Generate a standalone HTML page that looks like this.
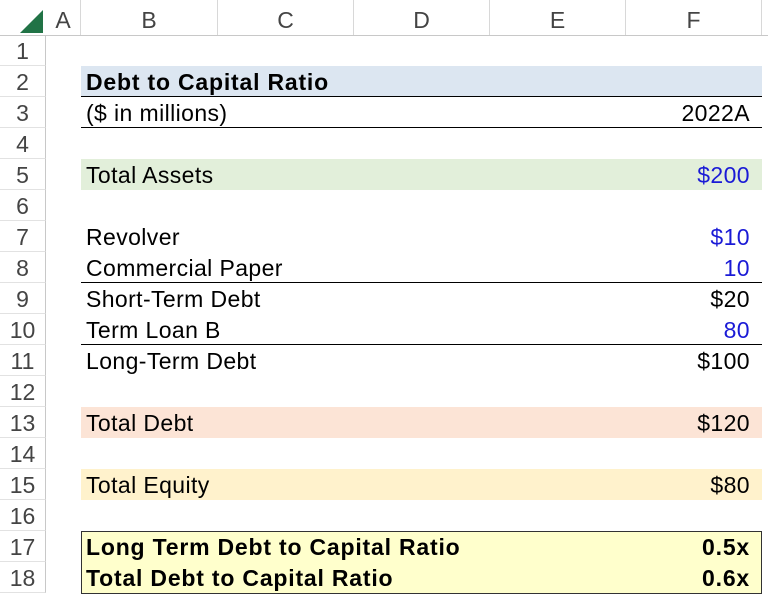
<!DOCTYPE html>
<html><head><style>
body{margin:0;width:768px;height:599px;overflow:hidden;background:#fff;font-family:"Liberation Sans",Arial,sans-serif;position:relative}
.hdr{position:absolute;top:0;left:0;width:768px;height:35px;background:#fff;border-bottom:1px solid #c8c8c8}
.col{position:absolute;top:0;height:35px;line-height:40px;text-align:center;font-size:23px;color:#444;border-right:1px solid #d8d8d8;box-sizing:border-box}
.rh{position:absolute;left:0;width:46px;height:31px;border-right:1px solid #c8c8c8;border-bottom:1px solid #e2e2e2;box-sizing:border-box;text-align:center;line-height:33px;font-size:23px;color:#444}
.r{position:absolute;left:81px;width:681px;height:31px;box-sizing:border-box;font-size:23px;line-height:33px;color:#000;letter-spacing:0.4px}
.r .l{position:absolute;left:5px}
.r .v{position:absolute;right:12px}
.bd{font-weight:bold;letter-spacing:0.8px}
.b{color:#1a1ad6}
</style></head><body>
<div class="hdr"></div>
<svg style="position:absolute;left:20px;top:10px" width="24" height="24"><polygon points="23,0 23,23 0,23" fill="#217346"/></svg>
<div class="col" style="left:46px;width:35px">A</div>
<div class="col" style="left:81px;width:137px">B</div>
<div class="col" style="left:218px;width:136px">C</div>
<div class="col" style="left:354px;width:136px">D</div>
<div class="col" style="left:490px;width:136px">E</div>
<div class="col" style="left:626px;width:136px">F</div>
<div class="rh" style="top:35px">1</div><div class="rh" style="top:66px">2</div><div class="rh" style="top:97px">3</div><div class="rh" style="top:128px">4</div><div class="rh" style="top:159px">5</div><div class="rh" style="top:190px">6</div><div class="rh" style="top:221px">7</div><div class="rh" style="top:252px">8</div><div class="rh" style="top:283px">9</div><div class="rh" style="top:314px">10</div><div class="rh" style="top:345px">11</div><div class="rh" style="top:376px">12</div><div class="rh" style="top:407px">13</div><div class="rh" style="top:438px">14</div><div class="rh" style="top:469px">15</div><div class="rh" style="top:500px">16</div><div class="rh" style="top:531px">17</div><div class="rh" style="top:562px">18</div>

<div class="r bd" style="top:66px;background:#dce6f1;border-bottom:1px solid #000"><span class="l">Debt to Capital Ratio</span></div>
<div class="r" style="top:97px;border-bottom:1px solid #000"><span class="l">($ in millions)</span><span class="v">2022A</span></div>
<div class="r" style="top:159px;background:#e2efda"><span class="l">Total Assets</span><span class="v b">$200</span></div>
<div class="r" style="top:221px"><span class="l">Revolver</span><span class="v b">$10</span></div>
<div class="r" style="top:252px;border-bottom:1px solid #000"><span class="l">Commercial Paper</span><span class="v b">10</span></div>
<div class="r" style="top:283px"><span class="l">Short-Term Debt</span><span class="v">$20</span></div>
<div class="r" style="top:314px;border-bottom:1px solid #000"><span class="l">Term Loan B</span><span class="v b">80</span></div>
<div class="r" style="top:345px"><span class="l">Long-Term Debt</span><span class="v">$100</span></div>
<div class="r" style="top:407px;background:#fce4d6"><span class="l">Total Debt</span><span class="v">$120</span></div>
<div class="r" style="top:469px;background:#fff2cc"><span class="l">Total Equity</span><span class="v">$80</span></div>
<div style="position:absolute;left:81px;top:531px;width:681px;height:63px;background:#ffffcc;border:1px solid #333;box-sizing:border-box"></div>
<div class="r bd" style="top:531px"><span class="l">Long Term Debt to Capital Ratio</span><span class="v">0.5x</span></div>
<div class="r bd" style="top:562px"><span class="l">Total Debt to Capital Ratio</span><span class="v">0.6x</span></div>
</body></html>
